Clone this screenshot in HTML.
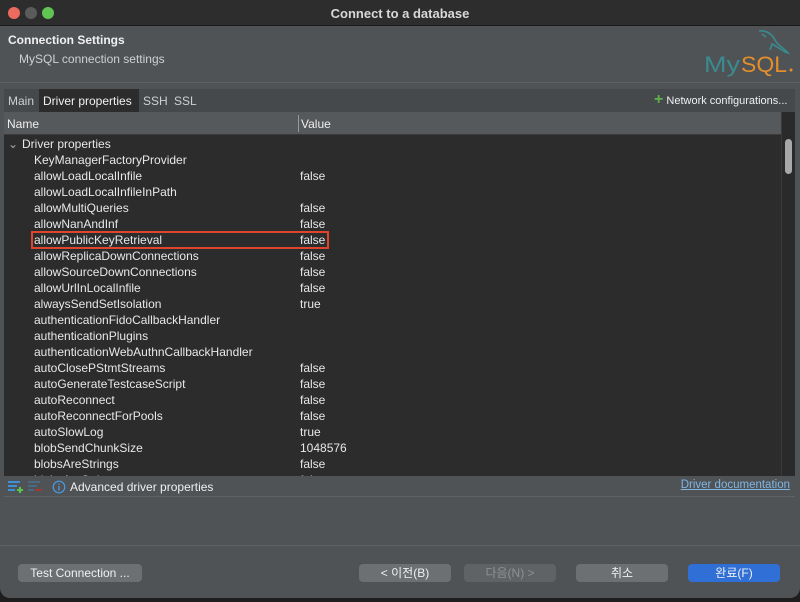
<!DOCTYPE html>
<html><head><meta charset="utf-8"><style>
*{margin:0;padding:0;box-sizing:border-box}
body{width:800px;height:602px;background:#1e1e1e;font-family:"Liberation Sans","Noto Sans CJK KR",sans-serif;font-size:12px;color:#e6e6e6;position:relative;overflow:hidden}
.win{position:absolute;left:0;top:0;width:800px;height:598px;background:#4f5356;border-radius:0 0 10px 10px;overflow:hidden}
.title{position:absolute;left:0;top:0;width:800px;height:26px;background:#2d2d2d;border-bottom:1px solid #1a1a1a}
.title .t{position:absolute;left:0;width:800px;top:6px;text-align:center;font-weight:bold;font-size:13px;color:#d8d8d8}
.dot{position:absolute;top:7px;width:12px;height:12px;border-radius:6px}
.abs{position:absolute;white-space:nowrap}
.tabs{position:absolute;left:4px;top:89px;width:791px;height:23px;background:#45494c}
.tab{position:absolute;top:5px;color:#cfcfcf;white-space:nowrap}
.hdr{position:absolute;left:4px;top:112px;width:777px;height:23px;background:#56595c;border-bottom:1px solid #3c3c3c}
.rows{position:absolute;left:4px;top:135px;width:777px;height:341px;background:#2c2c2c;overflow:hidden}
.r{position:absolute;left:30px;height:16px;line-height:16px;color:#e8e8e8;white-space:nowrap}
.v{position:absolute;left:296px;height:16px;line-height:16px;color:#e8e8e8}
.sb{position:absolute;left:781px;top:112px;width:14px;height:364px;background:#2a2a2a;border-left:1px solid #3a3a3a}
.btn{position:absolute;top:564px;height:18px;border-radius:4px;background:#6c7073;text-align:center;line-height:18px;font-size:12px;color:#f0f0f0}
</style></head><body>
<div class="win">
<div class="title">
<div class="dot" style="left:8px;background:#ed6a5e"></div>
<div class="dot" style="left:25px;background:#5b5b5b"></div>
<div class="dot" style="left:42px;background:#61c554"></div>
<div class="t">Connect to a database</div>
</div>
<div class="abs" style="left:8px;top:33px;font-weight:bold;color:#f0f0f0">Connection Settings</div>
<div class="abs" style="left:19px;top:52px;color:#d0d0d0">MySQL connection settings</div>
<svg class="abs" style="left:700px;top:28px" width="96" height="50" viewBox="0 0 96 50">
<path d="M59 3 C66 2 72 6 75 12 C78 18 84 20 88 25 L85 24 C80 21 76 18 72 16 L70 22 M62 6 L66 9" stroke="#3a8b90" stroke-width="1.6" fill="none"/>
<text x="4" y="44" font-family="Liberation Sans" font-size="22" fill="#3a8b90" textLength="36" lengthAdjust="spacingAndGlyphs">My</text>
<text x="41" y="44" font-family="Liberation Sans" font-size="22" fill="#e48e2a" textLength="46" lengthAdjust="spacingAndGlyphs">SQL</text>
<circle cx="91" cy="42" r="1.5" fill="#e48e2a"/>
</svg>
<div class="abs" style="left:0;top:82px;width:800px;height:1px;background:#5e6265"></div>
<div class="tabs">
<div class="tab" style="left:4px">Main</div>
<div style="position:absolute;left:35px;top:0;width:100px;height:23px;background:#2c2c2c"></div>
<div class="tab" style="left:39px;color:#f2f2f2">Driver properties</div>
<div class="tab" style="left:139px">SSH</div>
<div class="tab" style="left:170px">SSL</div>
<div class="tab" style="left:650px;color:#f0f0f0;font-size:11px"><span style="color:#5db14a;font-size:16px;line-height:12px;font-weight:bold">+</span> Network configurations...</div>
</div>
<div class="hdr">
<div class="abs" style="left:3px;top:5px;color:#eee">Name</div>
<div class="abs" style="left:294px;top:3px;width:1px;height:17px;background:#999"></div>
<div class="abs" style="left:297px;top:5px;color:#eee">Value</div>
</div>
<div class="rows">
<div class="r" style="left:4px;top:1px;color:#aaa">&#8964;</div>
<div class="r" style="left:18px;top:1px">Driver properties</div>
<div class="r" style="top:17px">KeyManagerFactoryProvider</div>
<div class="r" style="top:33px">allowLoadLocalInfile</div><div class="v" style="top:33px">false</div>
<div class="r" style="top:49px">allowLoadLocalInfileInPath</div>
<div class="r" style="top:65px">allowMultiQueries</div><div class="v" style="top:65px">false</div>
<div class="r" style="top:81px">allowNanAndInf</div><div class="v" style="top:81px">false</div>
<div class="r" style="top:97px">allowPublicKeyRetrieval</div><div class="v" style="top:97px">false</div>
<div class="abs" style="left:27px;top:96px;width:298px;height:18px;border:2px solid #e0442c"></div>
<div class="r" style="top:113px">allowReplicaDownConnections</div><div class="v" style="top:113px">false</div>
<div class="r" style="top:129px">allowSourceDownConnections</div><div class="v" style="top:129px">false</div>
<div class="r" style="top:145px">allowUrlInLocalInfile</div><div class="v" style="top:145px">false</div>
<div class="r" style="top:161px">alwaysSendSetIsolation</div><div class="v" style="top:161px">true</div>
<div class="r" style="top:177px">authenticationFidoCallbackHandler</div>
<div class="r" style="top:193px">authenticationPlugins</div>
<div class="r" style="top:209px">authenticationWebAuthnCallbackHandler</div>
<div class="r" style="top:225px">autoClosePStmtStreams</div><div class="v" style="top:225px">false</div>
<div class="r" style="top:241px">autoGenerateTestcaseScript</div><div class="v" style="top:241px">false</div>
<div class="r" style="top:257px">autoReconnect</div><div class="v" style="top:257px">false</div>
<div class="r" style="top:273px">autoReconnectForPools</div><div class="v" style="top:273px">false</div>
<div class="r" style="top:289px">autoSlowLog</div><div class="v" style="top:289px">true</div>
<div class="r" style="top:305px">blobSendChunkSize</div><div class="v" style="top:305px">1048576</div>
<div class="r" style="top:321px">blobsAreStrings</div><div class="v" style="top:321px">false</div>
<div class="r" style="top:337px">blobsAreStrings</div><div class="v" style="top:337px">false</div>
</div>
<div class="sb"><div class="abs" style="left:3px;top:27px;width:7px;height:35px;border-radius:4px;background:#a8a8a8"></div></div>
<div class="abs" style="left:4px;top:476px;width:791px;height:21px;background:#4f5356;border-bottom:1px solid #5e6265"></div>
<svg class="abs" style="left:7px;top:480px" width="38" height="14">
<g stroke="#3d8fd8" stroke-width="2"><line x1="1" y1="2" x2="13" y2="2"/><line x1="1" y1="6" x2="10" y2="6"/><line x1="1" y1="10" x2="8" y2="10"/></g>
<g stroke="#5bc44a" stroke-width="2"><line x1="10" y1="10" x2="16" y2="10"/><line x1="13" y1="7" x2="13" y2="13"/></g>
<g stroke="#4a6a82" stroke-width="2"><line x1="21" y1="2" x2="33" y2="2"/><line x1="21" y1="6" x2="30" y2="6"/><line x1="21" y1="10" x2="27" y2="10"/></g>
<line x1="28" y1="10" x2="35" y2="10" stroke="#a23a32" stroke-width="2"/>
</svg>
<svg class="abs" style="left:52px;top:480px" width="14" height="14"><circle cx="7" cy="7" r="5.8" stroke="#4d9ae0" stroke-width="1.2" fill="none"/><line x1="7" y1="6" x2="7" y2="10.5" stroke="#4d9ae0" stroke-width="1.3"/><circle cx="7" cy="4" r=".8" fill="#4d9ae0"/></svg>
<div class="abs" style="left:70px;top:480px;color:#f0f0f0">Advanced driver properties</div>
<div class="abs" style="right:10px;top:479px;color:#7fb6e6;text-decoration:underline;font-size:11.5px">Driver documentation</div>
<div class="abs" style="left:0;top:545px;width:800px;height:1px;background:#5e6265"></div>
<div class="btn" style="left:18px;width:124px">Test Connection ...</div>
<div class="btn" style="left:359px;width:92px">&lt; 이전(B)</div>
<div class="btn" style="left:464px;width:92px;background:#5f6366;color:#8e9194">다음(N) &gt;</div>
<div class="btn" style="left:576px;width:92px">취소</div>
<div class="btn" style="left:688px;width:92px;background:#2f6fd6">완료(F)</div>
</div>
</body></html>
